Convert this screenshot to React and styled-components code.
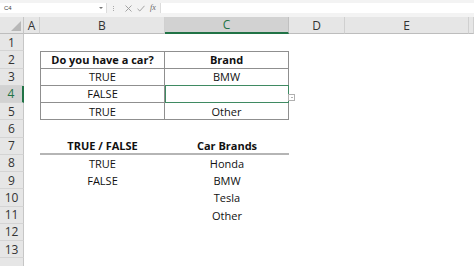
import React from "react";
import styled, { createGlobalStyle } from "styled-components";

const Global = createGlobalStyle`
  html, body { margin: 0; padding: 0; background: #ffffff; }
  body { width: 474px; height: 266px; overflow: hidden; font-family: "Open Sans", "Noto Sans", sans-serif; }
`;

const Page = styled.div`
  width: 474px;
  height: 266px;
  display: flex;
  flex-direction: column;
  background: #ffffff;
  overflow: hidden;
`;

const FormulaBar = styled.div`
  height: 17px;
  flex: none;
  display: flex;
  align-items: flex-start;
  padding-top: 3px;
  box-sizing: border-box;
  background: #f3f3f3;
`;

const NameBox = styled.div`
  width: 107px;
  height: 10px;
  background: #ffffff;
  border-right: 1px solid #dcdcdc;
  display: flex;
  align-items: center;
  justify-content: space-between;
  padding: 0 3px 0 4px;
  box-sizing: border-box;
  font-family: "Liberation Sans", sans-serif;
  font-size: 6px;
  color: #444;
`;

const Arrow = styled.span`
  width: 0;
  height: 0;
  border-left: 2px solid transparent;
  border-right: 2px solid transparent;
  border-top: 2px solid #777;
`;

const Dots = styled.div`
  width: 10px;
  height: 10px;
  display: flex;
  flex-direction: column;
  align-items: center;
  justify-content: center;
  gap: 1px;
  margin-left: 1px;
  & > span { width: 1px; height: 1px; background: #aaa; }
`;

const Tools = styled.div`
  display: flex;
  align-items: center;
  height: 10px;
  gap: 5px;
  padding: 0 4px 0 7px;
  color: #8a8a8a;
`;

const Fx = styled.span`
  font-family: "Liberation Serif", serif;
  font-style: italic;
  font-size: 8px;
  color: #666;
  line-height: 10px;
`;

const FormulaInput = styled.div`
  flex: 1;
  height: 10px;
  background: #ffffff;
  border-left: 1px solid #dcdcdc;
`;

const Sheet = styled.div`
  display: grid;
  grid-template-columns: 24px 16px 125px 124px 56px 124px 1fr;
  grid-template-rows: 17px;
  grid-auto-rows: 17.25px;
  flex: 1;
`;

const Corner = styled.div`
  background: #e6e6e6;
  border-right: 1px solid #c6c6c6;
  border-bottom: 1px solid #bdbdbd;
  box-sizing: border-box;
  position: relative;
  &::after {
    content: "";
    position: absolute;
    right: 2px;
    bottom: 2px;
    width: 0;
    height: 0;
    border-left: 10px solid transparent;
    border-bottom: 10px solid #b7b7b7;
  }
`;

const ColHead = styled.div`
  background: ${(p) => (p.$sel ? "#d2d2d2" : "#e6e6e6")};
  color: ${(p) => (p.$sel ? "#217346" : "#333")};
  border-right: 1px solid ${(p) => (p.$sel ? "#c0c0c0" : "#d0d0d0")};
  border-bottom: ${(p) => (p.$sel ? "2px solid #217346" : "1px solid #bdbdbd")};
  box-sizing: border-box;
  display: flex;
  align-items: center;
  justify-content: center;
  font-family: "Open Sans", sans-serif;
  font-size: 12px;
`;

const RowHead = styled.div`
  background: ${(p) => (p.$sel ? "#d2d2d2" : "#e6e6e6")};
  color: ${(p) => (p.$sel ? "#217346" : "#333")};
  border-right: ${(p) => (p.$sel ? "2px solid #217346" : "1px solid #c6c6c6")};
  border-bottom: 1px solid #d4d4d4;
  box-sizing: border-box;
  display: flex;
  align-items: center;
  justify-content: center;
  font-family: "Open Sans", sans-serif;
  font-size: 12px;
`;

const Cell = styled.div`
  position: relative;
  box-sizing: border-box;
  display: flex;
  align-items: center;
  justify-content: center;
  font-family: "Open Sans", sans-serif;
  font-size: 11px;
  font-weight: ${(p) => (p.$bold ? 700 : 400)};
  color: #111;
  white-space: nowrap;
  border-top: ${(p) => (p.$top ? "1px solid #8f8f8f" : "none")};
  border-left: ${(p) => (p.$left ? "1px solid #8f8f8f" : "none")};
  border-right: ${(p) => (p.$boxed ? "1px solid #8f8f8f" : "none")};
  border-bottom: ${(p) =>
    p.$boxed ? "1px solid #8f8f8f" : p.$under ? "2px solid #b5b5b5" : "none"};
`;

const Selection = styled.div`
  position: absolute;
  left: 0;
  right: -1px;
  top: -1px;
  bottom: -1px;
  border: 1px solid #3f8a62;
`;

const DropBtn = styled.div`
  position: absolute;
  right: -7px;
  bottom: 1px;
  width: 5px;
  height: 5px;
  background: #fff;
  border: 1px solid #b0b0b0;
  display: flex;
  align-items: center;
  justify-content: center;
  &::after {
    content: "";
    border-left: 1.5px solid transparent;
    border-right: 1.5px solid transparent;
    border-top: 1.5px solid #666;
  }
`;

const cols = ["A", "B", "C", "D", "E", "F"];

const rows = {
  2: { b: "Do you have a car?", c: "Brand", bold: true, boxed: true, top: true },
  3: { b: "TRUE", c: "BMW", boxed: true },
  4: { b: "FALSE", c: "", boxed: true, sel: true },
  5: { b: "TRUE", c: "Other", boxed: true },
  7: { b: "TRUE / FALSE", c: "Car Brands", bold: true, under: true },
  8: { b: "TRUE", c: "Honda" },
  9: { b: "FALSE", c: "BMW" },
  10: { b: "", c: "Tesla" },
  11: { b: "", c: "Other" },
};

export default function App() {
  const rowNums = Array.from({ length: 13 }, (_, i) => i + 1);
  return (
    <Page>
      <Global />
      <FormulaBar>
        <NameBox>
          <span>C4</span>
          <Arrow />
        </NameBox>
        <Dots>
          <span />
          <span />
          <span />
        </Dots>
        <Tools>
          <svg width="7" height="7" viewBox="0 0 7 7">
            <path d="M0.5 0.5 L6.5 6.5 M6.5 0.5 L0.5 6.5" stroke="#9a9a9a" strokeWidth="0.9" fill="none" />
          </svg>
          <svg width="8" height="7" viewBox="0 0 8 7">
            <path d="M0.5 3.8 L2.8 6 L7.5 0.8" stroke="#9a9a9a" strokeWidth="0.9" fill="none" />
          </svg>
          <Fx>fx</Fx>
        </Tools>
        <FormulaInput />
      </FormulaBar>
      <Sheet>
        <Corner />
        {cols.map((c) => (
          <ColHead key={c} $sel={c === "C"}>
            {c === "F" ? "" : c}
          </ColHead>
        ))}
        {rowNums.map((n) => {
          const r = rows[n] || {};
          return (
            <React.Fragment key={n}>
              <RowHead $sel={n === 4}>{n}</RowHead>
              <Cell />
              <Cell $bold={r.bold} $boxed={r.boxed} $top={r.top} $left={r.boxed} $under={r.under}>
                {r.b}
              </Cell>
              <Cell $bold={r.bold} $boxed={r.boxed} $top={r.top} $under={r.under}>
                {r.c}
                {r.sel && (
                  <>
                    <Selection />
                    <DropBtn />
                  </>
                )}
              </Cell>
              <Cell />
              <Cell />
              <Cell />
            </React.Fragment>
          );
        })}
        <RowHead />
      </Sheet>
    </Page>
  );
}
